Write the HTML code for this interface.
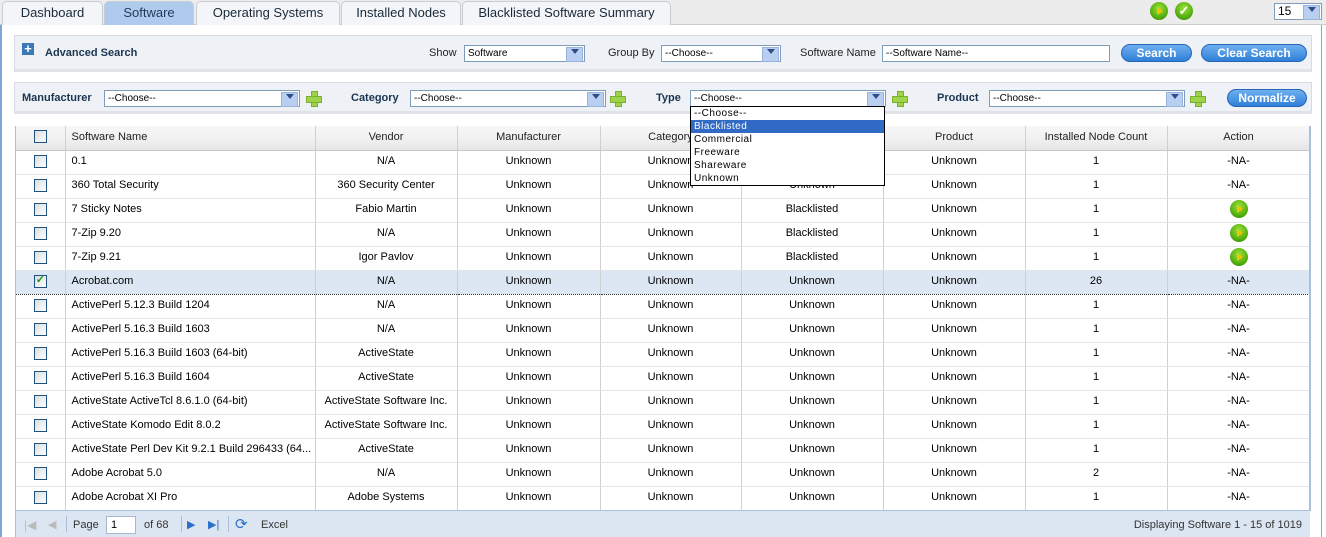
<!DOCTYPE html>
<html><head><meta charset="utf-8"><style>
*{box-sizing:border-box;margin:0;padding:0}
body{width:1326px;height:537px;overflow:hidden;background:#fff;font-family:"Liberation Sans",sans-serif;font-size:11px;color:#000;position:relative}
.abs{position:absolute}
.tabs{left:0;top:0;width:1326px;height:25px;background:#ececec;border-bottom:1px solid #c8cdd2}
.tab{position:absolute;top:1px;height:24px;background:#f3f5f8;border:1px solid #c9ccd0;border-bottom:none;border-radius:5px 5px 0 0;font-size:13px;color:#1a2a3a;text-align:center;line-height:22px}
.tab.on{background:#aecbee;color:#1d3a5a}
.panel{background:#eef2f7;border:1px solid #d6dbe2;border-bottom:3px solid #dfe2e6}
.lbl{font-size:11px;color:#222}
.blbl{font-weight:bold;font-size:11px;color:#1b3550}
.sel,.inp{position:absolute;height:17px;background:#fff;border:1px solid #7f9db9;font-size:10px;line-height:15px;padding-left:3px;color:#000}
.sel:after{content:"";position:absolute;right:1px;top:1px;width:15px;height:13px;background:#b9cff2;border:1px solid #9ab3dc}
.arr{position:absolute;right:5px;top:3px;width:0;height:0;border-left:4px solid transparent;border-right:4px solid transparent;border-top:5px solid #2d4d86;z-index:2}
.btn{position:absolute;height:18px;border-radius:9px;background:linear-gradient(#6fb0ef,#2f7fd8);border:1px solid #2565b5;color:#fff;font-weight:bold;font-size:12px;text-align:center;line-height:16px}
.plus{position:absolute;width:14px;height:14px}
.plus:before{content:"";position:absolute;left:5px;top:0;width:5px;height:14px;background:#9fd34a;border:1px solid #7ab032}
.plus:after{content:"";position:absolute;left:0;top:5px;width:14px;height:5px;background:#9fd34a;border:1px solid #7ab032}
table{position:absolute;left:16px;top:126px;border-collapse:collapse;width:1294px;table-layout:fixed}
td,th{height:24px;border-right:1px solid #d0d0d0;border-bottom:1px solid #e4e4e4;font-size:11px;font-weight:normal;text-align:center;white-space:nowrap;overflow:hidden;padding-bottom:2px}
th{background:linear-gradient(#f7f7f7 0,#f1f1f1 50%,#e6e6e6 100%);border-bottom:1px solid #c8c8c8;color:#222}
td.n,th.n{text-align:left;padding-left:6px}
tr.s td{background:#dde7f3;border-top:1px dotted #333;border-bottom:1px dotted #333}
.cb{display:inline-block;width:13px;height:13px;border:1px solid #1c5180;background:linear-gradient(135deg,#dcdcdc,#fff);vertical-align:middle;position:relative}
.go{display:inline-block;width:18px;height:18px;border-radius:50%;background:radial-gradient(circle at 50% 35%,#9be23a,#4aa70a 70%,#2f7a05);position:relative;vertical-align:middle}
.go:after{content:"";position:absolute;left:7px;top:5px;border-top:4px solid transparent;border-bottom:4px solid transparent;border-left:6px solid #f5c400}
.foot{left:16px;top:510px;width:1294px;height:27px;background:#dce6f2;border-top:1px solid #a8c0dc;font-size:11px;color:#333}
</style></head><body>
<div class="abs" style="left:0;top:0;width:2px;height:537px;background:#7ea6d8"></div>
<div class="abs" style="right:4px;top:25px;width:1px;height:512px;background:#7ea6d8"></div>
<div class="abs tabs">
<div class="tab" style="left:2px;width:101px">Dashboard</div>
<div class="tab on" style="left:104px;width:90px">Software</div>
<div class="tab" style="left:196px;width:144px">Operating Systems</div>
<div class="tab" style="left:341px;width:120px">Installed Nodes</div>
<div class="tab" style="left:462px;width:209px">Blacklisted Software Summary</div>
<div class="go abs" style="left:1150px;top:2px;width:18px;height:18px"></div>
<div class="abs" style="left:1175px;top:2px;width:18px;height:18px;border-radius:50%;background:radial-gradient(circle at 50% 35%,#9be23a,#4aa70a 70%,#2f7a05);color:#fff;font-size:13px;font-weight:bold;text-align:center;line-height:18px">✓</div>
<div class="sel" style="left:1274px;top:3px;width:48px;height:17px;font-size:12px">15<span class="arr"></span></div>
</div>

<div class="abs panel" style="left:14px;top:35px;width:1298px;height:37px">
<div class="abs" style="left:7px;top:7px;width:12px;height:12px;background:#3a78b8;color:#fff;font-weight:bold;font-size:13px;line-height:11px;text-align:center">+</div>
<div class="abs blbl" style="left:30px;top:11px">Advanced Search</div>
<div class="abs lbl" style="left:414px;top:11px">Show</div>
<div class="sel" style="left:449px;top:9px;width:121px">Software<span class="arr"></span></div>
<div class="abs lbl" style="left:593px;top:11px">Group By</div>
<div class="sel" style="left:646px;top:9px;width:120px">--Choose--<span class="arr"></span></div>
<div class="abs lbl" style="left:785px;top:11px">Software Name</div>
<div class="inp" style="left:867px;top:9px;width:228px">--Software Name--</div>
<div class="btn" style="left:1106px;top:8px;width:71px">Search</div>
<div class="btn" style="left:1186px;top:8px;width:106px">Clear Search</div>
</div>

<div class="abs panel" style="left:14px;top:82px;width:1298px;height:32px">
<div class="abs blbl" style="left:7px;top:9px">Manufacturer</div>
<div class="sel" style="left:89px;top:7px;width:196px">--Choose--<span class="arr"></span></div>
<div class="plus" style="left:291px;top:8px"></div>
<div class="abs blbl" style="left:336px;top:9px">Category</div>
<div class="sel" style="left:395px;top:7px;width:196px">--Choose--<span class="arr"></span></div>
<div class="plus" style="left:595px;top:8px"></div>
<div class="abs blbl" style="left:641px;top:9px">Type</div>
<div class="sel" style="left:675px;top:7px;width:196px">--Choose--<span class="arr"></span></div>
<div class="plus" style="left:877px;top:8px"></div>
<div class="abs blbl" style="left:922px;top:9px">Product</div>
<div class="sel" style="left:974px;top:7px;width:196px">--Choose--<span class="arr"></span></div>
<div class="plus" style="left:1175px;top:8px"></div>
<div class="btn" style="left:1212px;top:6px;width:80px">Normalize</div>
</div>

<table>
<colgroup><col style="width:49px"><col style="width:250px"><col style="width:142px"><col style="width:143px"><col style="width:141px"><col style="width:142px"><col style="width:142px"><col style="width:142px"><col style="width:143px"></colgroup>
<thead><tr><th><span class="cb"></span></th><th class="n">Software Name</th><th>Vendor</th><th>Manufacturer</th><th>Category</th><th>Type</th><th>Product</th><th>Installed Node Count</th><th>Action</th></tr></thead>
<tbody id="tb"></tbody></table>
<div class="abs" style="left:1309px;top:126px;width:2px;height:385px;background:#a8c0dc"></div>
<div class="abs" style="left:15px;top:126px;width:1px;height:411px;background:#a8c0dc"></div>

<div class="abs" style="left:690px;top:106px;width:195px;height:80px;background:#fff;border:1px solid #000;font-size:10px;letter-spacing:.5px;z-index:5">
<div style="height:13px;line-height:13px;padding-left:3px">--Choose--</div>
<div style="height:13px;line-height:13px;padding-left:3px;background:#316ac5;color:#fff">Blacklisted</div>
<div style="height:13px;line-height:13px;padding-left:3px">Commercial</div>
<div style="height:13px;line-height:13px;padding-left:3px">Freeware</div>
<div style="height:13px;line-height:13px;padding-left:3px">Shareware</div>
<div style="height:13px;line-height:13px;padding-left:3px">Unknown</div>
</div>

<div class="abs foot">
<span class="abs" style="left:8px;top:7px;color:#bbb;font-size:12px">|◀</span>
<span class="abs" style="left:32px;top:7px;color:#bbb;font-size:11px">◀</span>
<span class="abs" style="left:50px;top:5px;width:1px;height:16px;background:#a8c0dc"></span>
<span class="abs" style="left:57px;top:8px">Page</span>
<span class="abs" style="left:90px;top:5px;width:30px;height:18px;background:#fff;border:1px solid #a8b8cc;padding-left:4px;line-height:16px;font-size:11px;color:#000">1</span>
<span class="abs" style="left:128px;top:8px">of 68</span>
<span class="abs" style="left:165px;top:5px;width:1px;height:16px;background:#a8c0dc"></span>
<span class="abs" style="left:171px;top:7px;color:#2a6fc9;font-size:11px">▶</span>
<span class="abs" style="left:192px;top:7px;color:#2a6fc9;font-size:11px">▶|</span>
<span class="abs" style="left:212px;top:5px;width:1px;height:16px;background:#a8c0dc"></span>
<span class="abs" style="left:219px;top:4px;color:#2a6fc9;font-size:15px">⟳</span>
<span class="abs" style="left:245px;top:8px">Excel</span>
<span class="abs" style="right:8px;top:8px">Displaying Software 1 - 15 of 1019</span>
</div>

<script>
var R=[["0.1","N/A","Unknown",1,0],["360 Total Security","360 Security Center","Unknown",1,0],["7 Sticky Notes","Fabio Martin","Blacklisted",1,1],["7-Zip 9.20","N/A","Blacklisted",1,1],["7-Zip 9.21","Igor Pavlov","Blacklisted",1,1],["Acrobat.com","N/A","Unknown",26,0],["ActivePerl 5.12.3 Build 1204","N/A","Unknown",1,0],["ActivePerl 5.16.3 Build 1603","N/A","Unknown",1,0],["ActivePerl 5.16.3 Build 1603 (64-bit)","ActiveState","Unknown",1,0],["ActivePerl 5.16.3 Build 1604","ActiveState","Unknown",1,0],["ActiveState ActiveTcl 8.6.1.0 (64-bit)","ActiveState Software Inc.","Unknown",1,0],["ActiveState Komodo Edit 8.0.2","ActiveState Software Inc.","Unknown",1,0],["ActiveState Perl Dev Kit 9.2.1 Build 296433 (64...","ActiveState","Unknown",1,0],["Adobe Acrobat 5.0","N/A","Unknown",2,0],["Adobe Acrobat XI Pro","Adobe Systems","Unknown",1,0]];
var h="";R.forEach(function(r,i){h+='<tr'+(i==5?' class="s"':'')+'><td><span class="cb">'+(i==5?'<span style="position:absolute;left:1px;top:-3px;color:#1a9a1a;font-size:11px;font-weight:bold">✓</span>':'')+'</span></td><td class="n">'+r[0]+'</td><td>'+r[1]+'</td><td>Unknown</td><td>Unknown</td><td>'+r[2]+'</td><td>Unknown</td><td>'+r[3]+'</td><td>'+(r[4]?'<span class="go"></span>':'-NA-')+'</td></tr>';});
document.getElementById("tb").innerHTML=h;
</script>
</body></html>
